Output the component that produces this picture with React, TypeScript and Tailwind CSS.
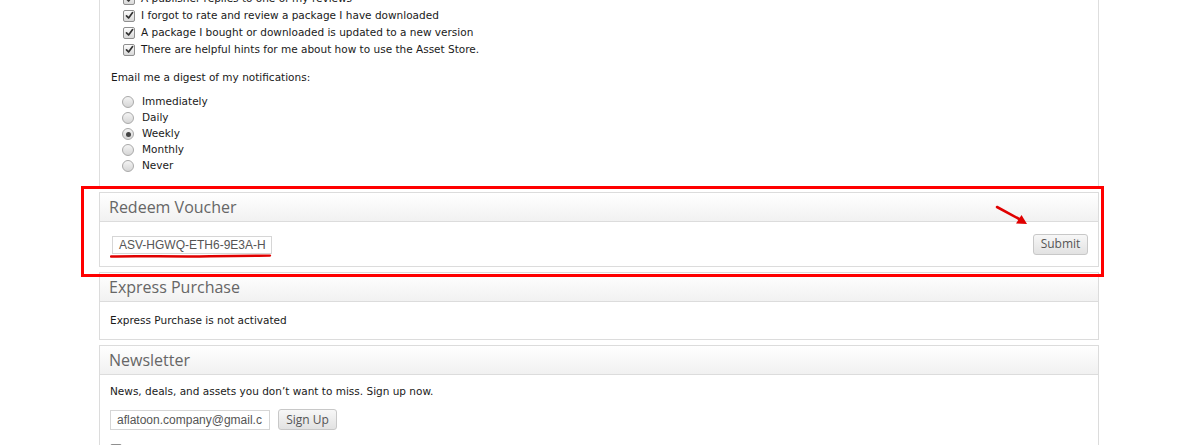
import React from 'react';

const bodyFont = { fontFamily: '"DejaVu Sans", Verdana, sans-serif' };
const headFont = { fontFamily: '"Open Sans", Arial, sans-serif' };

const Checkbox = () => (
  <span className="inline-flex h-[12px] w-[12px] shrink-0 items-center justify-center rounded-[2px] border border-[#8f8f8f] bg-gradient-to-b from-[#fdfdfd] to-[#d8d8d8]">
    <svg width="9" height="9" viewBox="0 0 9 9">
      <path d="M1.5 4.8 L3.6 7 L7.6 1.6" fill="none" stroke="#333" strokeWidth="1.7" strokeLinecap="round" strokeLinejoin="round" />
    </svg>
  </span>
);

const Radio = ({ checked }: { checked?: boolean }) => (
  <span className="inline-flex h-[12px] w-[12px] shrink-0 items-center justify-center rounded-full border border-[#a9a9a9] bg-gradient-to-b from-[#f4f4f4] to-[#d6d6d6]">
    {checked && <span className="h-[5px] w-[5px] rounded-full bg-[#444]" />}
  </span>
);

const PanelHeader = ({ title }: { title: string }) => (
  <div
    className="flex h-[29px] items-center border-b border-[#dcdcdc] bg-gradient-to-b from-[#ffffff] to-[#f1f1f1] px-[9px] text-[16px] text-[#666]"
    style={headFont}
  >
    {title}
  </div>
);

const notifyRows = [
  'A publisher replies to one of my reviews',
  'I forgot to rate and review a package I have downloaded',
  'A package I bought or downloaded is updated to a new version',
  'There are helpful hints for me about how to use the Asset Store.',
];

const digest = ['Immediately', 'Daily', 'Weekly', 'Monthly', 'Never'];

export default function App() {
  return (
    <div className="h-[445px] w-full overflow-hidden bg-white text-[#1a1a1a]" style={bodyFont}>
      <div className="ml-[99px] flex w-[1000px] flex-col gap-[5px]">
        {/* notification settings (top is scrolled off) */}
        <div className="-mt-[10px] border-x border-b border-[#dedede] pb-[12px] pl-[11px] text-[10.5px]">
          <div className="flex flex-col pl-[12px]">
            {notifyRows.map((r) => (
              <div key={r} className="flex h-[17px] items-center gap-[6px]">
                <Checkbox />
                <span>{r}</span>
              </div>
            ))}
          </div>
          <div className="mt-[11px] flex h-[17px] items-center">Email me a digest of my notifications:</div>
          <div className="mt-[8px] flex flex-col pl-[11px]">
            {digest.map((d) => (
              <div key={d} className="flex h-[16px] items-center gap-[8px]">
                <Radio checked={d === 'Weekly'} />
                <span>{d}</span>
              </div>
            ))}
          </div>
        </div>

        {/* Redeem Voucher */}
        <div className="relative">
          <div className="border border-[#dcdcdc]">
            <PanelHeader title="Redeem Voucher" />
            <div className="flex h-[44px] items-center justify-between pl-[12px] pr-[10px]">
              <div className="relative mt-[1px]">
                <div
                  className="flex h-[18px] w-[160px] items-center whitespace-nowrap border border-[#d6d6d6] pl-[6px] text-[12px] text-[#555]"
                  style={{ fontFamily: '"Liberation Sans", Arial, sans-serif' }}
                >
                  ASV-HGWQ-ETH6-9E3A-H
                </div>
                <svg className="absolute -left-[2px] top-[17px]" width="162" height="6" viewBox="0 0 162 6">
                  <path d="M1 3.5 C 30 2.5, 60 4, 100 3.3 S 150 2.8, 160 2.6" fill="none" stroke="#e00000" strokeWidth="2.4" strokeLinecap="round" />
                </svg>
              </div>
              <button
                className="h-[21px] w-[55px] rounded-[3px] border border-[#c8c8c8] bg-gradient-to-b from-[#f7f7f7] to-[#e2e2e2] text-[12px] text-[#555]"
                style={headFont}
              >
                Submit
              </button>
            </div>
          </div>
          {/* annotation overlay */}
          <div className="pointer-events-none absolute -left-[18px] -right-[5px] -top-[6px] -bottom-[10px] border-[3px] border-[#ff0000]" />
          <svg className="pointer-events-none absolute left-[895px] top-[12px]" width="40" height="26" viewBox="0 0 40 26">
            <line x1="3" y1="3" x2="27" y2="16" stroke="#e00000" strokeWidth="2.6" strokeLinecap="round" />
            <path d="M33 20 L22 19.5 L27.5 11 Z" fill="#e00000" />
          </svg>
        </div>

        {/* Express Purchase */}
        <div className="border border-[#dcdcdc]">
          <PanelHeader title="Express Purchase" />
          <div className="flex h-[37px] items-center px-[10px] text-[10.5px]">Express Purchase is not activated</div>
        </div>

        {/* Newsletter */}
        <div className="border border-[#dcdcdc]">
          <PanelHeader title="Newsletter" />
          <div className="px-[10px] pt-[8px] text-[10.5px]">
            <div className="flex h-[17px] items-center">News, deals, and assets you don’t want to miss. Sign up now.</div>
            <div className="mt-[9px] flex items-center gap-[8px]">
              <div
                className="flex h-[20px] w-[160px] items-center overflow-hidden whitespace-nowrap border border-[#d6d6d6] px-[6px] text-[12px] text-[#555]"
                style={{ fontFamily: '"Liberation Sans", Arial, sans-serif' }}
              >
                aflatoon.company@gmail.c
              </div>
              <button
                className="h-[21px] w-[59px] rounded-[3px] border border-[#c8c8c8] bg-gradient-to-b from-[#f7f7f7] to-[#e2e2e2] text-[12px] text-[#555]"
                style={headFont}
              >
                Sign Up
              </button>
            </div>
            <div className="mt-[11px] flex h-[17px] items-center gap-[6px]">
              <Checkbox />
              <span>
                I agree to the <span className="text-[#2a6fb8]">Unity Privacy Policy</span> and the processing and use of my information.
              </span>
            </div>
          </div>
        </div>
      </div>
    </div>
  );
}
